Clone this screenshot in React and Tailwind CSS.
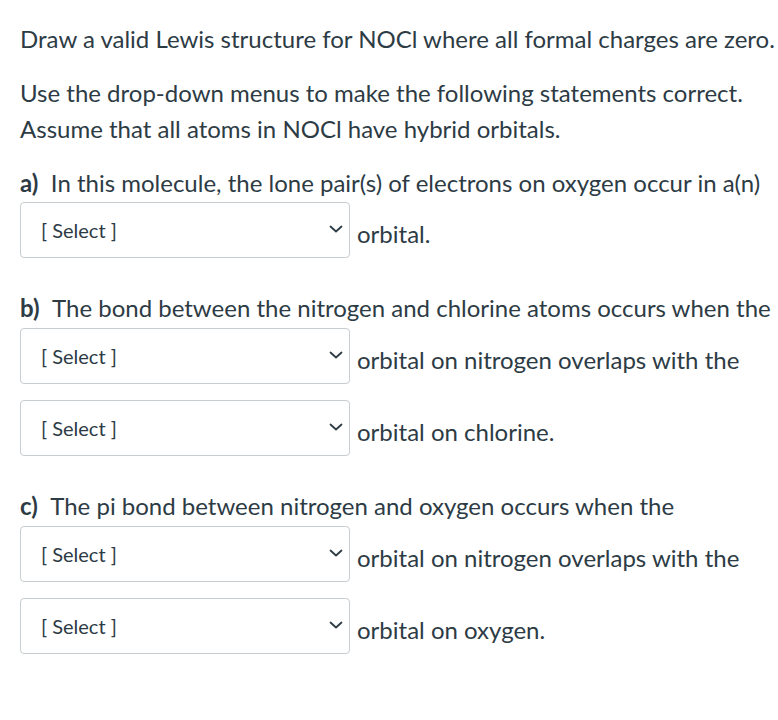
import React from "react";

function Select() {
  return (
    <div className="flex h-[56px] w-[330px] shrink-0 items-center justify-between rounded-[4px] border border-[#c7cdd1] bg-white pl-[20px] pr-[5px]">
      <span className="text-[20px] leading-[24px] text-[#2d3b45] mt-[-1px]">[ Select ]</span>
      <svg width="16" height="10" viewBox="0 0 16 10" className="mt-[-2px]">
        <path d="M2.5 2.5 L8 7.5 L13.5 2.5" fill="none" stroke="#2d3b45" strokeWidth="1.8" strokeLinecap="round" strokeLinejoin="round" />
      </svg>
    </div>
  );
}

function Row({ text }) {
  return (
    <div className="flex items-start">
      <Select />
      <span className="ml-[7px] mt-[13.7px] whitespace-nowrap">{text}</span>
    </div>
  );
}

function Label({ letter, children }) {
  return (
    <p className="whitespace-nowrap">
      <span className="font-bold mr-[12.5px]">{letter}</span>
      {children}
    </p>
  );
}

export default function App() {
  return (
    <div
      className="min-h-[720px] w-[778px] overflow-hidden bg-white pl-[20px] pt-[20.5px] text-[24px] leading-[36px] text-[#2d3b45]"
      style={{ fontFamily: "Lato, 'Open Sans', sans-serif" }}
    >
      <p className="mb-[18px] whitespace-nowrap">
        Draw a valid Lewis structure for NOCl where all formal charges are zero.
      </p>
      <p className="mb-[18px] whitespace-nowrap">
        Use the drop-down menus to make the following statements correct.
        <br />
        Assume that all atoms in NOCl have hybrid orbitals.
      </p>

      <Label letter="a)">In this molecule, the lone pair(s) of electrons on oxygen occur in a(n)</Label>
      <div className="mt-[1.5px] flex flex-col gap-[16px]">
        <Row text="orbital." />
      </div>

      <div className="mt-[31.5px]">
        <Label letter="b)">The bond between the nitrogen and chlorine atoms occurs when the</Label>
      </div>
      <div className="mt-[2.5px] flex flex-col gap-[16px]">
        <Row text="orbital on nitrogen overlaps with the" />
        <Row text="orbital on chlorine." />
      </div>

      <div className="mt-[31.5px]">
        <Label letter="c)">The pi bond between nitrogen and oxygen occurs when the</Label>
      </div>
      <div className="mt-[2.5px] flex flex-col gap-[16px]">
        <Row text="orbital on nitrogen overlaps with the" />
        <Row text="orbital on oxygen." />
      </div>
    </div>
  );
}
